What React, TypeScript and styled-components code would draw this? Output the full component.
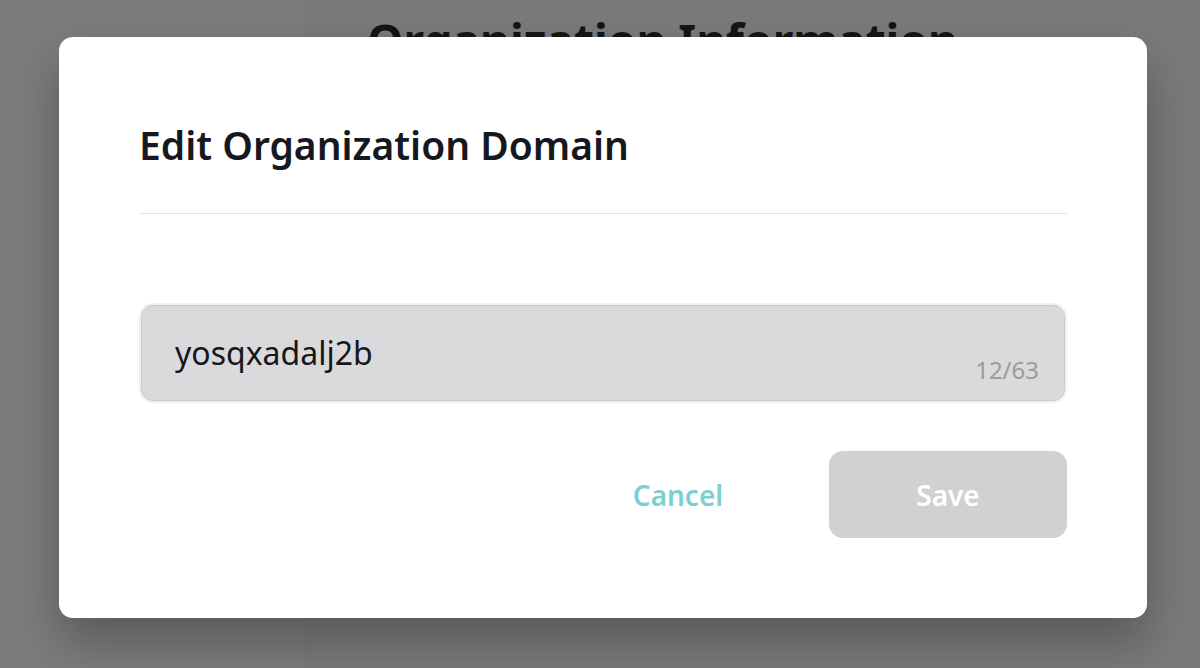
import React from "react";
import styled, { createGlobalStyle } from "styled-components";

const Global = createGlobalStyle`
  html, body { margin: 0; padding: 0; }
  body { font-family: "Noto Sans", "Open Sans", sans-serif; width: 1200px; height: 668px; overflow: hidden; }
  * { box-sizing: border-box; }
`;

const Page = styled.div`
  display: flex;
  width: 1200px;
  height: 668px;
  background: #f4f4f4;
  position: relative;
`;

const Sidebar = styled.aside`
  width: 305px;
  flex-shrink: 0;
  background: #f8f8f8;
  border-right: 1px solid #ececec;
`;

const Main = styled.main`
  flex: 1;
  padding: 10px 0 0 62px;
`;

const PageTitle = styled.h1`
  margin: 0;
  font-size: 46px;
  font-weight: 700;
  color: #2a2a2a;
  line-height: 60px;
`;

const Overlay = styled.div`
  position: absolute;
  inset: 0;
  background: rgba(0, 0, 0, 0.5);
  display: flex;
  align-items: flex-start;
  padding: 37px 0 0 59px;
`;

const Modal = styled.div`
  width: 1088px;
  height: 581px;
  background: #fff;
  border-radius: 14px;
  box-shadow: 0 24px 48px rgba(0, 0, 0, 0.28);
  padding: 0 80px;
  display: flex;
  flex-direction: column;
`;

const Title = styled.h2`
  margin: 0;
  padding: 84px 0 44px;
  font-size: 39px;
  font-weight: 600;
  color: #161820;
  line-height: 48px;
  border-bottom: 1.5px solid #e2e2e6;
`;

const FieldRing = styled.div`
  margin-top: 89px;
  padding: 2px;
  border-radius: 14px;
  background: #f0f0f2;
`;

const Field = styled.div`
  position: relative;
  height: 96px;
  border-radius: 12px;
  border: 1.5px solid #cbcbce;
  background: #dadadc;
  display: flex;
  align-items: flex-start;
  padding: 29px 0 0 33px;
`;

const Value = styled.span`
  font-size: 32px;
  color: #15171d;
  line-height: 36px;
`;

const Counter = styled.span`
  position: absolute;
  right: 25px;
  bottom: 16px;
  font-size: 24px;
  color: #9b9b9e;
  line-height: 28px;
`;

const Actions = styled.div`
  margin-top: 48px;
  display: flex;
  justify-content: flex-end;
  gap: 32px;
`;

const Button = styled.button<{ $primary?: boolean }>`
  width: 238px;
  height: 87px;
  border: none;
  border-radius: 14px;
  font-family: inherit;
  font-size: 28px;
  font-weight: 600;
  cursor: pointer;
  background: ${(p) => (p.$primary ? "#d1d0d3" : "transparent")};
  color: ${(p) => (p.$primary ? "#ffffff" : "#7dcfd1")};
`;

export default function App() {
  return (
    <>
      <Global />
      <Page>
        <Sidebar />
        <Main>
          <PageTitle>Organization Information</PageTitle>
        </Main>
        <Overlay>
          <Modal>
            <Title>Edit Organization Domain</Title>
            <FieldRing>
              <Field>
                <Value>yosqxadalj2b</Value>
                <Counter>12/63</Counter>
              </Field>
            </FieldRing>
            <Actions>
              <Button>Cancel</Button>
              <Button $primary>Save</Button>
            </Actions>
          </Modal>
        </Overlay>
      </Page>
    </>
  );
}
